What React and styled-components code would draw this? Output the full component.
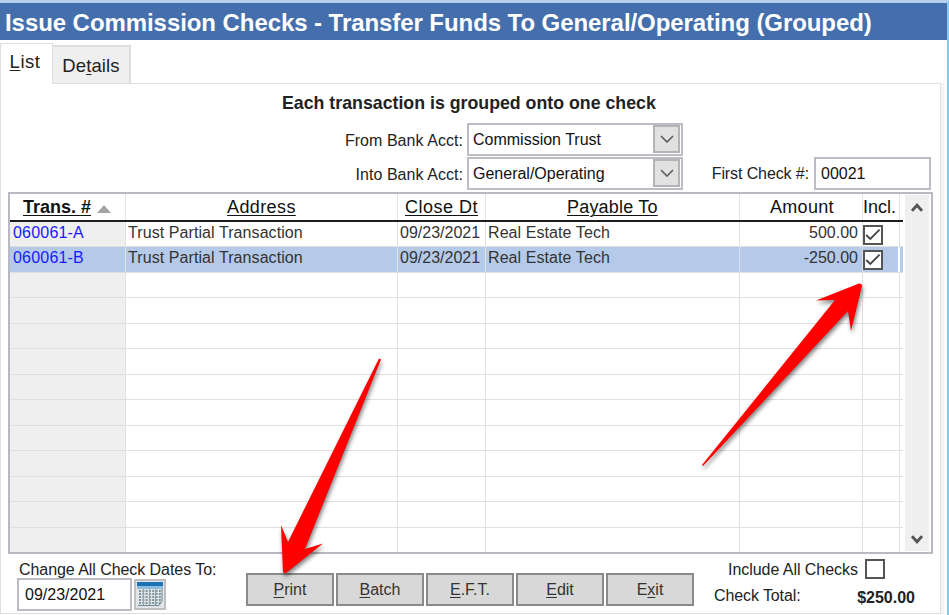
import React from 'react';
import styled, { createGlobalStyle } from 'styled-components';

const GlobalStyle = createGlobalStyle`
    * {
        box-sizing: border-box;
    }

    body {
        margin: 0;
        background: #fff;
        color: #222;
        font-family: 'Liberation Sans', Arial, sans-serif;
        font-size: 16px;
        line-height: 18px;
        overflow: hidden;
    }

    u {
        text-decoration-thickness: 1px;
        text-underline-offset: 2px;
    }
`

const Window = styled.div`
    position: relative;
    display: flex;
    flex-direction: column;
    width: 949px;
    height: 615px;
    border-top: 3px solid #b6cfec;
    border-right: 2px solid #86cbf0;
    white-space: nowrap;
`

const TitleBar = styled.h1`
    flex: none;
    height: 37px;
    margin: 0;
    padding-left: 5px;
    background: #446fac;
    color: #fff;
    font-size: 24px;
    line-height: 40px;
    letter-spacing: -0.07px;
`

const Tabs = styled.div`
    display: flex;
    align-items: flex-end;
    flex: none;
    height: 43px;
    padding-top: 2px;
`

const Tab = styled.button`
    height: ${(p) => (p.$active ? '41px' : '38px')};
    width: ${(p) => (p.$active ? '53px' : '78px')};
    margin: 0;
    margin-bottom: ${(p) => (p.$active ? '-1px' : '0')};
    padding: ${(p) => (p.$active ? '0 3px 4px 0' : '1px 0 0')};
    border: solid #dedede;
    border-width: ${(p) => (p.$active ? '1px 1px 0' : '2px 2px 0 0')};
    background: ${(p) => (p.$active ? '#fff' : '#efefef')};
    color: #222;
    font: 18.5px 'Liberation Sans', Arial, sans-serif;
    letter-spacing: ${(p) => (p.$active ? '0.5px' : '0.1px')};
    z-index: ${(p) => (p.$active ? 1 : 0)};
`

const Panel = styled.div`
    display: flex;
    flex-direction: column;
    flex: 1;
    width: 941px;
    margin-bottom: 1px;
    padding: 0 8px 0 7px;
    border: 1px solid #dedede;
    box-shadow: 3px 0 0 #f3f3f3;
`

const Heading = styled.h2`
    margin: 8px 0 0 -1px;
    padding-left: 275px;
    height: 31px;
    font-size: 17.75px;
    line-height: 22px;
`

const Fields = styled.div`
    display: grid;
    grid-template-columns: 459px 216px 131px 117px;
    grid-template-rows: 33px 33px;
    row-gap: 1px;
    height: 69px;
`

const FieldLabel = styled.label`
    padding: ${(p) => p.$pad || '9px 4px 0 0'};
    text-align: right;
    letter-spacing: ${(p) => p.$spacing || '0.05px'};
`

const Select = styled.div`
    display: flex;
    justify-content: space-between;
    padding: 0 0 0 4px;
    border: 2px solid #bcbcc4;
    line-height: 29px;
    color: #111;
`

const SelectButton = styled.span`
    display: flex;
    align-items: center;
    justify-content: center;
    width: 27px;
    height: 28px;
    margin-right: 1px;
    border: 2px solid #b4b4b4;
    background: #e1e1e1;
`

const TextInput = styled.div`
    width: ${(p) => p.$width};
    height: 33px;
    padding-left: ${(p) => p.$left || '6px'};
    border: 2px solid #bcbcc4;
    background: #fff;
    line-height: 29px;
    color: #111;
`

const Grid = styled.div`
    display: flex;
    width: 925px;
    height: 362px;
    padding-right: 1px;
    border: 2px solid #b9b9c1;
`

const Table = styled.div`
    display: flex;
    flex-direction: column;
    width: 893px;
`

const columns = '116px 272px 88px 254px 123px 37px 3px';

const HeaderRow = styled.div`
    display: grid;
    grid-template-columns: ${columns};
    flex: none;
    height: 28px;
    border-bottom: 2px solid #1c1c1c;
`

const HeaderCell = styled.div`
    padding-left: ${(p) => p.$left}px;
    border-right: 1px solid #e3e3e3;
    color: #111;
    font-size: 18px;
    font-weight: ${(p) => (p.$bold ? 'bold' : 'normal')};
    line-height: 26px;
    letter-spacing: ${(p) => p.$spacing || 0}px;

    &:last-child {
        border: 0;
    }
`

const SortMark = styled.svg`
    margin-left: 6px;
`

const Row = styled.div`
    display: grid;
    grid-template-columns: ${columns};
    flex: 1;
    min-height: 0;
    border-bottom: 1px solid #dfdfdf;
    background: ${(p) => (p.$selected ? '#b5cae9' : '#fff')};

    &:last-child {
        border-bottom: 0;
    }
`

const Cell = styled.div`
    padding: 0 4px 0 2px;
    border-right: 1px solid #dfdfdf;
    overflow: hidden;
    color: #333;
    line-height: 21px;
    text-align: ${(p) => (p.$right ? 'right' : 'left')};
    letter-spacing: ${(p) => p.$spacing || 0}px;

    &:last-child {
        border: 0;
        padding: 0;
    }
`

const IdCell = styled(Cell)`
    padding-left: 3px;
    background: ${(p) => (p.$selected ? 'transparent' : '#efefef')};
    color: #1a1aff;
    letter-spacing: 0.2px;
`

const CheckCell = styled(Cell)`
    padding: 3px 0 0 0;
    border-right: ${(p) => (p.$selected ? '2px solid #fff' : '1px solid #dfdfdf')};
`

const CheckBox = styled.span`
    display: flex;
    align-items: center;
    justify-content: center;
    width: 20px;
    height: 20px;
    border: 2px solid #555;
    background: #fff;
`

const ScrollBar = styled.div`
    display: flex;
    flex-direction: column;
    justify-content: space-between;
    align-items: center;
    width: 24px;
    margin: 1px 0 1px 2px;
    padding: 8px 0 7px;
    background: #efefef;
`

const Footer = styled.div`
    display: flex;
    height: 58px;
`

const DateGroup = styled.div`
    width: 238px;
    padding: 7px 0 0 9px;
    letter-spacing: -0.06px;
`

const DateRow = styled.div`
    display: flex;
    gap: 2px;
    margin-top: -1px;
    letter-spacing: 0;
`

const DateLabel = styled.div`
    padding-left: 2px;
`

const CalendarButton = styled.div`
    width: 32px;
    height: 31px;
    margin-top: 1px;
    padding: 1px;
    border: 2px solid #bfbfc3;
    background: #e4e4e4;
`

const Buttons = styled.div`
    display: flex;
    gap: 2px;
    width: 460px;
    padding-top: 19px;
`

const Button = styled.button`
    width: 88px;
    height: 33px;
    padding: 0;
    border: 2px solid #8a8a8a;
    background: #d8d8d8;
    color: #333;
    font: 16px 'Liberation Sans', Arial, sans-serif;
`

const Totals = styled.div`
    width: 212px;
    padding-top: 5px;
`

const IncludeAll = styled.label`
    display: flex;
    gap: 7px;
    padding-left: 22px;
    line-height: 22px;
    letter-spacing: -0.05px;
`

const TotalRow = styled.div`
    display: flex;
    justify-content: space-between;
    width: 209px;
    margin-top: 6px;
    padding-left: 8px;
    letter-spacing: -0.1px;
`

const Amount = styled.b`
    padding-top: 2px;
    letter-spacing: 0;
`

const Arrows = styled.svg`
    position: absolute;
    left: 0;
    top: -3px;
    pointer-events: none;
    filter: drop-shadow(1px 3px 2px rgba(0, 0, 0, 0.5));
`

const DropIcon = () => (
    <svg width="14" height="8" viewBox="0 0 14 8" fill="none" stroke="#606060" strokeWidth="1.7">
        <path d="M1 1L7 7L13 1" />
    </svg>
)

const CheckMark = () => (
    <svg width="16" height="14" viewBox="0 0 16 14" fill="none" stroke="#444" strokeWidth="1.8">
        <path d="M1.2 7L5.3 11L14.6 1.6" />
    </svg>
)

const ScrollIcon = ({ down }) => (
    <svg width="12" height="9" viewBox="0 0 12 9" fill="none" stroke="#555" strokeWidth="2.8">
        <path d={down ? 'M1 1.2L6 6.8L11 1.2' : 'M1 7.8L6 2.2L11 7.8'} />
    </svg>
)

const CalendarIcon = () => (
    <svg width="26" height="25" viewBox="0 0 26 25" display="block">
        <rect width="26" height="25" fill="#dfe6e9" />
        <rect width="26" height="4" fill="#1d72b5" />
        <rect y="4" width="26" height="3" fill="#8fbbdc" />
        <path d="M2 9H24M2 12H24M2 15H24M2 18H24M2 21H24" stroke="#84939a" strokeWidth="1.8" strokeDasharray="2 1.3" />
        <path d="M6.5 7V23M12.5 7V23M18.5 7V23" stroke="#8fa5ae" />
        <path d="M1 23.5H22L25 19V7" fill="none" stroke="#6d8793" />
    </svg>
)

const transactions = [
    { id: '060061-A', address: 'Trust Partial Transaction', date: '09/23/2021', payee: 'Real Estate Tech', amount: '500.00' },
    { id: '060061-B', address: 'Trust Partial Transaction', date: '09/23/2021', payee: 'Real Estate Tech', amount: '-250.00', selected: true },
]

const emptyRows = Array.from({ length: 11 })

const App = () => {
    return (
        <Window>
            <GlobalStyle />
            <TitleBar>Issue Commission Checks - Transfer Funds To General/Operating (Grouped)</TitleBar>
            <Tabs>
                <Tab $active><u>L</u>ist</Tab>
                <Tab>De<u>t</u>ails</Tab>
            </Tabs>
            <Panel>
                <Heading>Each transaction is grouped onto one check</Heading>
                <Fields>
                    <FieldLabel>From Bank Acct:</FieldLabel>
                    <Select>
                        Commission Trust
                        <SelectButton><DropIcon /></SelectButton>
                    </Select>
                    <span />
                    <span />
                    <FieldLabel>Into Bank Acct:</FieldLabel>
                    <Select>
                        General/Operating
                        <SelectButton><DropIcon /></SelectButton>
                    </Select>
                    <FieldLabel $pad="8px 5px 0 0" $spacing="-0.1px">First Check #:</FieldLabel>
                    <TextInput $width="117px" $left="5px">00021</TextInput>
                </Fields>
                <Grid>
                    <Table>
                        <HeaderRow>
                            <HeaderCell $left={13} $bold>
                                <u>Trans. #</u>
                                <SortMark width="14" height="8" viewBox="0 0 14 8"><path d="M0 8L7 0L14 8Z" fill="#a3a3a3" /></SortMark>
                            </HeaderCell>
                            <HeaderCell $left={101} $spacing={0.4}><u>Address</u></HeaderCell>
                            <HeaderCell $left={7} $spacing={0.5}><u>Close Dt</u></HeaderCell>
                            <HeaderCell $left={81} $spacing={0.2}><u>Payable To</u></HeaderCell>
                            <HeaderCell $left={30} $spacing={0.3}>Amount</HeaderCell>
                            <HeaderCell $left={0}>Incl.</HeaderCell>
                            <HeaderCell $left={0} />
                        </HeaderRow>
                        {transactions.map((t) => (
                            <Row key={t.id} $selected={t.selected}>
                                <IdCell $selected={t.selected}>{t.id}</IdCell>
                                <Cell $spacing={0.08}>{t.address}</Cell>
                                <Cell>{t.date}</Cell>
                                <Cell $spacing={0.08}>{t.payee}</Cell>
                                <Cell $right>{t.amount}</Cell>
                                <CheckCell $selected={t.selected}>
                                    <CheckBox><CheckMark /></CheckBox>
                                </CheckCell>
                                <Cell />
                            </Row>
                        ))}
                        {emptyRows.map((_, i) => (
                            <Row key={i}>
                                <IdCell />
                                <Cell />
                                <Cell />
                                <Cell />
                                <Cell />
                                <Cell />
                                <Cell />
                            </Row>
                        ))}
                    </Table>
                    <ScrollBar>
                        <ScrollIcon />
                        <ScrollIcon down />
                    </ScrollBar>
                </Grid>
                <Footer>
                    <DateGroup>
                        <DateLabel>Change All Check Dates To:</DateLabel>
                        <DateRow>
                            <TextInput $width="115px">09/23/2021</TextInput>
                            <CalendarButton><CalendarIcon /></CalendarButton>
                        </DateRow>
                    </DateGroup>
                    <Buttons>
                        <Button><u>P</u>rint</Button>
                        <Button><u>B</u>atch</Button>
                        <Button><u>E</u>.F.T.</Button>
                        <Button><u>E</u>dit</Button>
                        <Button>E<u>x</u>it</Button>
                    </Buttons>
                    <Totals>
                        <IncludeAll>Include All Checks <CheckBox /></IncludeAll>
                        <TotalRow>
                            Check Total:
                            <Amount>$250.00</Amount>
                        </TotalRow>
                    </Totals>
                </Footer>
            </Panel>
            <Arrows width="949" height="615" viewBox="0 0 949 615">
                <path d="M379 358.5L381 359.5L305 549L323 543.5L286 573Q284 574 283 572L281 525L288 542Z" fill="#ff0000" />
                <path d="M702 465L835 300L816 300.5L859 283.5Q862 283 862 286L851 331L848 311L703 466Z" fill="#ff0000" />
            </Arrows>
        </Window>
    )
}

export default App
